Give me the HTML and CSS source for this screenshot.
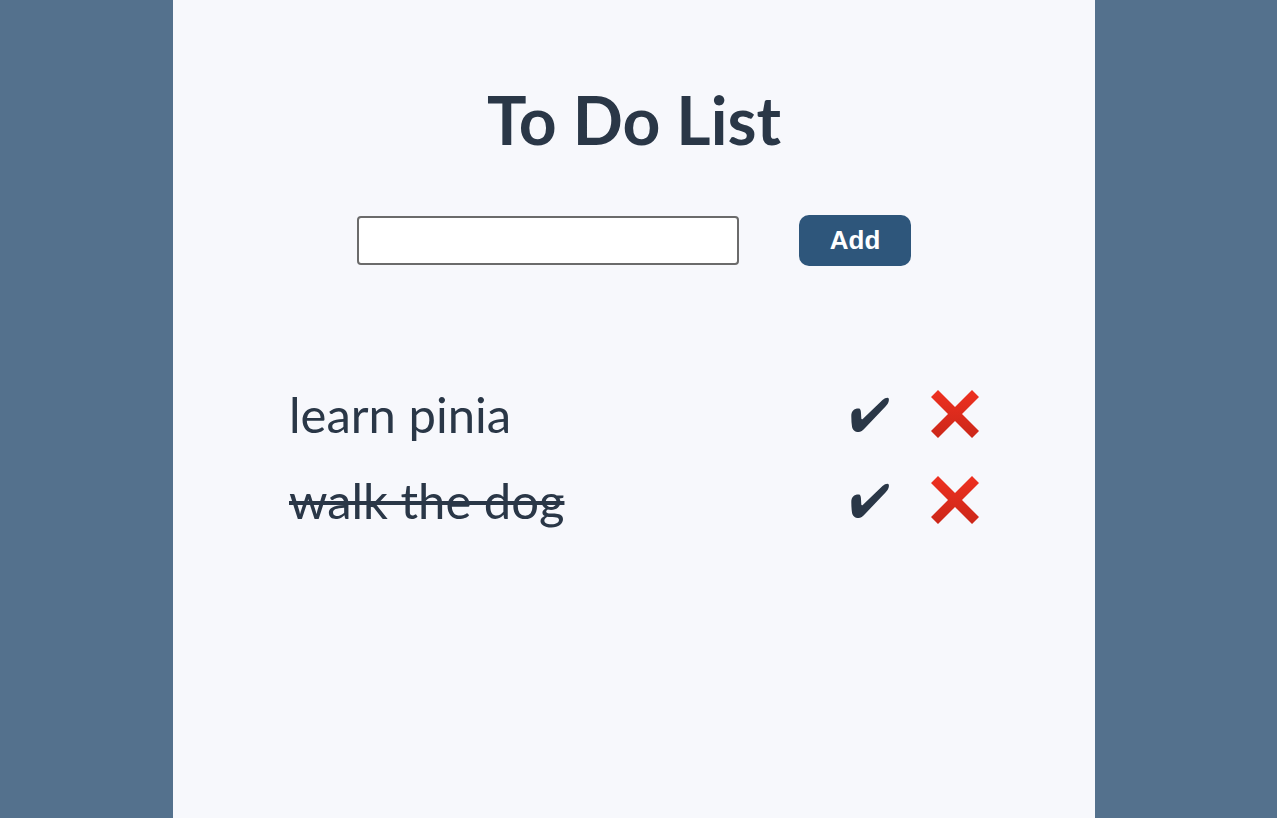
FILE: index.html
```html
<!DOCTYPE html>
<html lang="en">
	<head>
		<meta charset="UTF-8" />
		<meta name="viewport" content="width=device-width, initial-scale=1.0" />
		<title>To Do List</title>
		<link rel="stylesheet" href="styles.css">
	</head>

	<body>
		<svg class="defs" aria-hidden="true">
			<linearGradient id="red" x1="0" y1="0" x2="0" y2="1">
				<stop offset="0" stop-color="#ee3020" />
				<stop offset="1" stop-color="#cb2719" />
			</linearGradient>
			<symbol id="check" viewBox="0 0 40 48">
				<path d="M1.3 26C1.3 21 4 18.500 8.500 18.500C11 18.500 11 21 11.300 28.500C11.400 29.500 12.200 29.600 13 28.800L32.500 10Q35 7.700 37.500 7.700C39 7.700 39.300 9.500 38.500 12Q38 14 35.500 16.500L15.500 37.500Q11.500 42 8.500 42C5 42 2.400 40 2 36.500Q1.300 32 1.300 26Z" />
			</symbol>
			<symbol id="cross" viewBox="0 0 48 48">
				<path fill="url(#red)" d="M7 0L24 17L41 0L48 7L31 24L48 41L41 48L24 31L7 48L0 41L17 24L0 7Z" />
			</symbol>
		</svg>
		<main class="container">
			<h1 class="title">To Do List</h1>
			<form class="add" onsubmit="return false">
				<input type="text" class="inp" id="todo" aria-label="New item" />
				<button type="submit" class="btn">Add</button>
			</form>
			<ul class="list">
				<li class="item">
					<span class="txt">learn pinia</span>
					<button type="button" class="icon check" aria-label="Done">
						<svg><use href="#check" /></svg>
					</button>
					<button type="button" class="icon cross" aria-label="Delete">
						<svg><use href="#cross" /></svg>
					</button>
				</li>
				<li class="item">
					<span class="txt completed">walk the dog</span>
					<button type="button" class="icon check" aria-label="Done">
						<svg><use href="#check" /></svg>
					</button>
					<button type="button" class="icon cross" aria-label="Delete">
						<svg><use href="#cross" /></svg>
					</button>
				</li>
			</ul>
		</main>
	</body>
</html>
```
FILE: styles.css
```css
* {
	box-sizing: border-box;
	margin: 0;
	padding: 0;
}

body {
	background: #54718d;
	color: #2a3747;
	font-family: Lato, "Liberation Sans", sans-serif;
}

.defs {
	position: absolute;
	width: 0;
	height: 0;
}

.container {
	min-height: 100vh;
	margin: 0 182px 0 173px;
	padding: 80px 116px;
	background: #f7f8fc;
}

.title {
	font-size: 66px;
	line-height: 80px;
	text-align: center;
}

.add {
	display: flex;
	align-items: center;
	justify-content: center;
	gap: 60px;
	margin-top: 55px;
}

.inp {
	width: 382px;
	min-width: 0;
	height: 49px;
	padding: 0 8px;
	border: 2px solid #6b6b6b;
	border-radius: 4px;
	background: #fff;
	font-size: 26px;
}

.btn {
	width: 112px;
	height: 51px;
	border: none;
	border-radius: 10px;
	background: #2e567b;
	color: #fff;
	font-family: "Liberation Sans", Arial, sans-serif;
	font-size: 26px;
	font-weight: bold;
}

.list {
	margin-top: 105px;
	list-style: none;
}

.item {
	display: flex;
	align-items: center;
	height: 86px;
}

.txt {
	flex: 1;
	font-size: 49px;
}

.completed {
	text-decoration: line-through;
	text-decoration-thickness: 4px;
}

.icon {
	height: 48px;
	border: none;
	background: none;
	cursor: pointer;
}

.icon svg {
	display: block;
	width: 100%;
	height: 100%;
}

.check {
	width: 40px;
	margin-right: 41px;
	fill: #2a3747;
}

.cross {
	width: 48px;
}
```
